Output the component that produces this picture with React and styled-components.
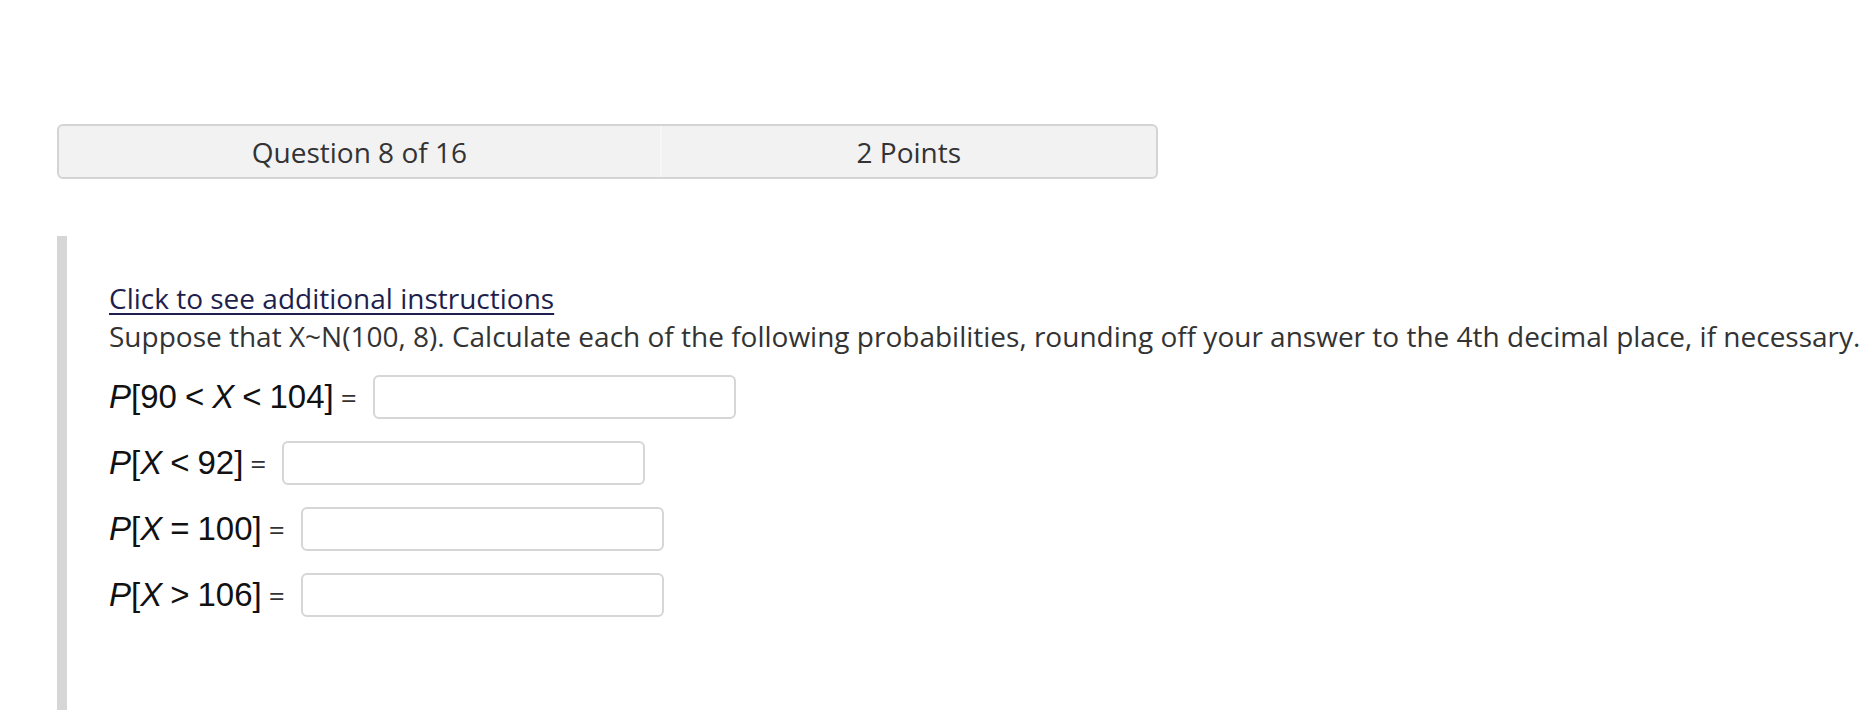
import React from 'react'
import styled, { createGlobalStyle } from 'styled-components'

const GlobalStyle = createGlobalStyle`
  html, body {
    margin: 0;
    padding: 0;
    background: #ffffff;
  }
  body {
    font-family: 'Open Sans', 'Liberation Sans', sans-serif;
    color: #333333;
  }
`

const Page = styled.div`
  padding-top: 124px;
  padding-left: 57px;
`

const HeaderBar = styled.div`
  display: flex;
  width: 1101px;
  height: 55px;
  box-sizing: border-box;
  border: 2px solid #d4d4d4;
  border-radius: 6px;
  background: #f2f2f3;
  overflow: hidden;
`

const HeaderCell = styled.div`
  width: ${(p) => p.width}px;
  display: flex;
  align-items: center;
  justify-content: center;
  font-size: 28px;
  color: #333333;
  border-left: ${(p) => (p.divider ? '2px solid #f7f7f8' : 'none')};
`

const QuestionBlock = styled.section`
  margin-top: 57px;
  border-left: 10px solid #d6d6d6;
  padding: 43px 0 90px 42px;
  min-height: 340px;
`

const InstructionsLink = styled.a`
  display: block;
  font-size: 28px;
  line-height: 38px;
  color: #1f1f4d;
  text-decoration: underline;
  text-underline-offset: 4px;
  text-decoration-thickness: 2px;
  cursor: pointer;
`

const Prompt = styled.p`
  margin: 0 0 20px;
  font-size: 28px;
  line-height: 38px;
  color: #333333;
  white-space: nowrap;
`

const AnswerRow = styled.div`
  display: flex;
  align-items: center;
  height: 44px;
  margin-bottom: 22px;
`

const MathExpr = styled.span`
  font-family: 'Liberation Sans', Arial, sans-serif;
  font-size: 33px;
  line-height: 44px;
  color: #111111;
  white-space: nowrap;
`

const Var = styled.i`
  font-style: italic;
`

const Rel = styled.span`
  margin: 0 8px;
`

const Equals = styled.span`
  font-size: 28px;
  color: #333333;
  margin: 0 16px 0 7px;
`

const AnswerInput = styled.input`
  width: 363px;
  height: 44px;
  box-sizing: border-box;
  border: 2px solid #d6d6d6;
  border-radius: 6px;
  background: #ffffff;
  font-family: 'Open Sans', sans-serif;
  font-size: 24px;
  padding: 0 10px;
  outline: none;
`

const rows = [
  {
    key: 'between',
    expr: (
      <>
        <Var>P</Var>[90<Rel>&lt;</Rel><Var>X</Var><Rel>&lt;</Rel>104]
      </>
    )
  },
  {
    key: 'below',
    expr: (
      <>
        <Var>P</Var>[<Var>X</Var><Rel>&lt;</Rel>92]
      </>
    )
  },
  {
    key: 'equal',
    expr: (
      <>
        <Var>P</Var>[<Var>X</Var><Rel>=</Rel>100]
      </>
    )
  },
  {
    key: 'above',
    expr: (
      <>
        <Var>P</Var>[<Var>X</Var><Rel>&gt;</Rel>106]
      </>
    )
  }
]

const App = () => {
  return (
    <Page>
      <GlobalStyle />
      <HeaderBar>
        <HeaderCell width={604}>Question 8 of 16</HeaderCell>
        <HeaderCell width={497} divider>
          2 Points
        </HeaderCell>
      </HeaderBar>
      <QuestionBlock>
        <InstructionsLink>Click to see additional instructions</InstructionsLink>
        <Prompt>
          Suppose that X~N(100, 8). Calculate each of the following probabilities, rounding off your answer to the 4th
          decimal place, if necessary.
        </Prompt>
        {rows.map((r) => (
          <AnswerRow key={r.key}>
            <MathExpr>{r.expr}</MathExpr>
            <Equals>=</Equals>
            <AnswerInput type="text" aria-label={r.key} />
          </AnswerRow>
        ))}
      </QuestionBlock>
    </Page>
  )
}

export default App
